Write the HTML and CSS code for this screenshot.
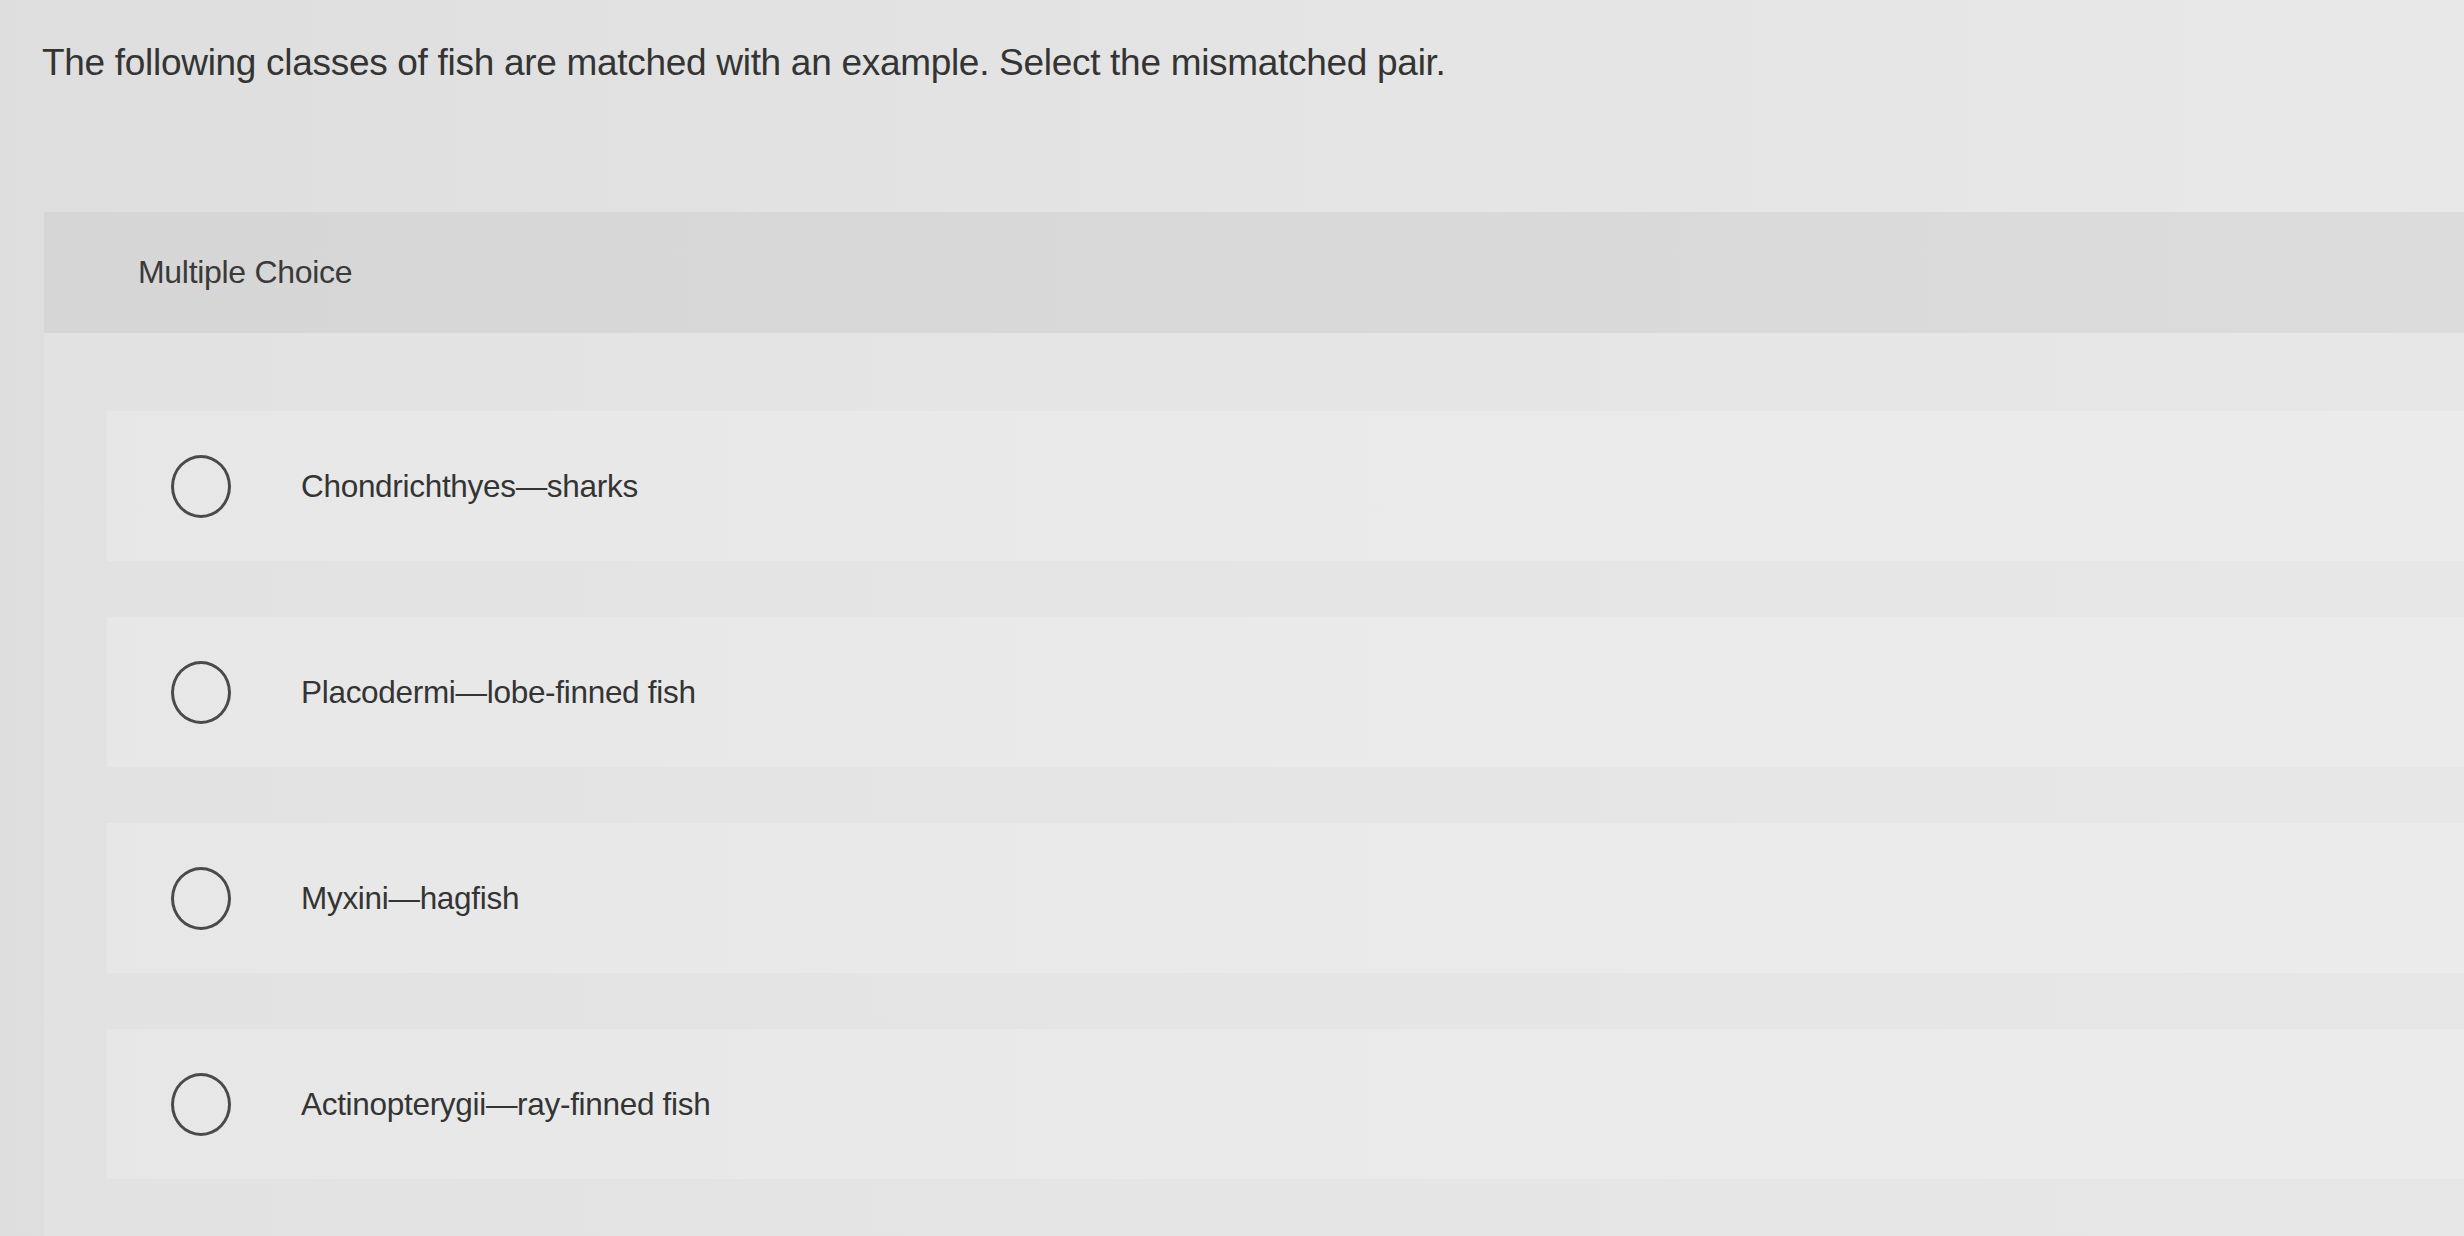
FILE: index.html
```html
<!DOCTYPE html>
<html>
<head>
<meta charset="utf-8">
<link rel="stylesheet" href="styles.css">
</head>
<body>
<div class="page">
  <p class="prompt">The following classes of fish are matched with an example. Select the mismatched pair.</p>
  <section class="panel">
    <div class="panel-header">Multiple Choice</div>
    <div class="panel-body">
      <div class="option"><span class="radio"></span><span class="label">Chondrichthyes—sharks</span></div>
      <div class="option"><span class="radio"></span><span class="label">Placodermi—lobe-finned fish</span></div>
      <div class="option"><span class="radio"></span><span class="label">Myxini—hagfish</span></div>
      <div class="option"><span class="radio"></span><span class="label">Actinopterygii—ray-finned fish</span></div>
    </div>
  </section>
</div>
</body>
</html>
```

FILE: styles.css
```css
html, body {
  margin: 0;
  padding: 0;
  height: 100%;
}
body {
  background: linear-gradient(90deg, #dedede 0%, #e3e3e3 40%, #e8e8e8 100%);
  font-family: "Liberation Sans", Arial, sans-serif;
  color: #383838;
  overflow: hidden;
}
.page {
  display: flex;
  flex-direction: column;
  height: 100%;
}
.prompt {
  margin: 0;
  padding: 38px 0 0 42px;
  height: 212px;
  box-sizing: border-box;
  font-size: 37px;
  line-height: 50px;
  letter-spacing: -0.3px;
  color: #343434;
}
.panel {
  margin-left: 44px;
  flex: 1;
  display: flex;
  flex-direction: column;
}
.panel-header {
  height: 121px;
  box-sizing: border-box;
  padding-left: 94px;
  display: flex;
  align-items: center;
  background: linear-gradient(90deg, #d6d6d6 0%, #d9d9d9 60%, #dcdcdc 100%);
  font-size: 32px;
  letter-spacing: -0.3px;
  color: #3a3a3a;
}
.panel-body {
  flex: 1;
  padding: 78px 0 0 63px;
  display: flex;
  flex-direction: column;
  gap: 56px;
  background: linear-gradient(90deg, #e2e2e2 0%, #e5e5e5 50%, #e7e7e7 100%);
}
.option {
  height: 150px;
  display: flex;
  align-items: center;
  padding-left: 64px;
  background: linear-gradient(90deg, #e7e7e7 0%, #eaeaea 50%, #ebebeb 100%);
}
.radio {
  width: 60px;
  height: 63px;
  border: 3px solid #4a4a4a;
  border-radius: 50%;
  box-sizing: border-box;
  flex: none;
}
.label {
  margin-left: 70px;
  font-size: 31.5px;
  letter-spacing: -0.3px;
  color: #343434;
}
```
